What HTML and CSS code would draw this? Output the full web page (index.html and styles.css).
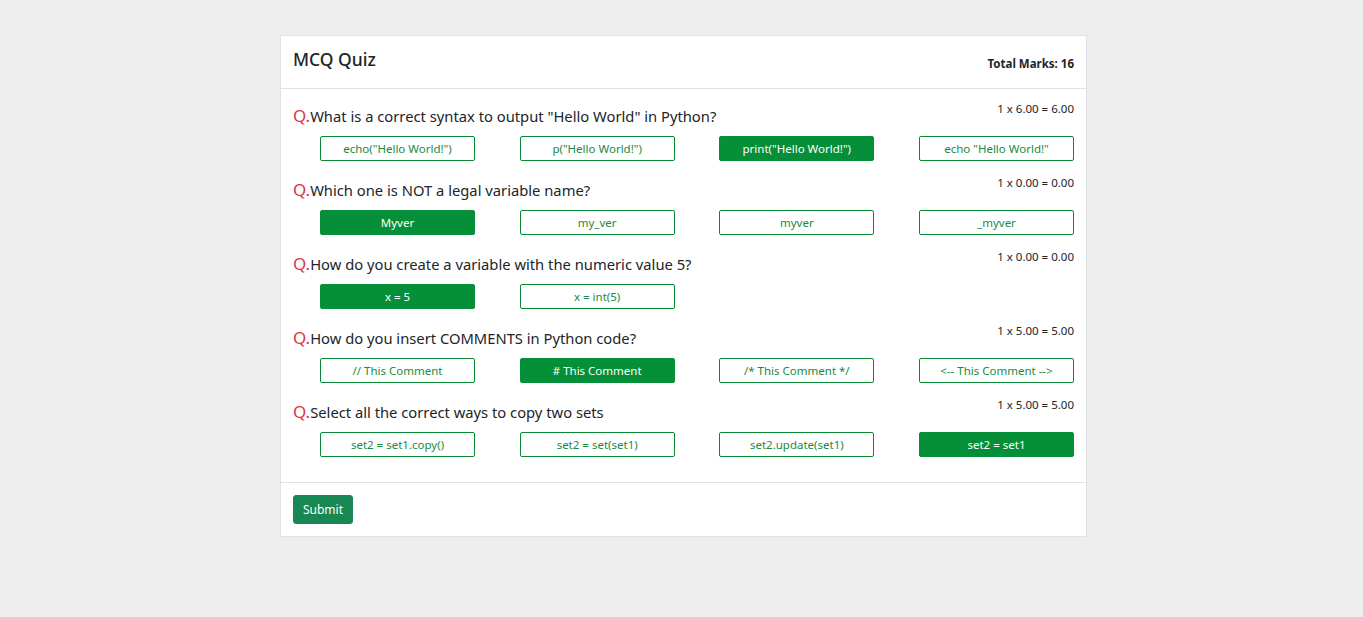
FILE: index.html
```html
<!DOCTYPE html>
<html lang="en">
<head>
<meta charset="utf-8">
<title>MCQ Quiz</title>
<link rel="stylesheet" href="styles.css">
</head>
<body>
<div class="page">
  <div class="card">
    <div class="card-header">
      <h1 class="title">MCQ Quiz</h1>
      <div class="total">Total Marks: 16</div>
    </div>
    <div class="card-body">
      <div class="question">
        <div class="q-head">
          <div class="q-text"><span class="q-mark">Q.</span>What is a correct syntax to output "Hello World" in Python?</div>
          <div class="marks">1 x 6.00 = 6.00</div>
        </div>
        <div class="options">
          <button class="opt">echo("Hello World!")</button>
          <button class="opt">p("Hello World!")</button>
          <button class="opt selected">print("Hello World!")</button>
          <button class="opt">echo "Hello World!"</button>
        </div>
      </div>
      <div class="question">
        <div class="q-head">
          <div class="q-text"><span class="q-mark">Q.</span>Which one is NOT a legal variable name?</div>
          <div class="marks">1 x 0.00 = 0.00</div>
        </div>
        <div class="options">
          <button class="opt selected">Myver</button>
          <button class="opt">my_ver</button>
          <button class="opt">myver</button>
          <button class="opt">_myver</button>
        </div>
      </div>
      <div class="question">
        <div class="q-head">
          <div class="q-text"><span class="q-mark">Q.</span>How do you create a variable with the numeric value 5?</div>
          <div class="marks">1 x 0.00 = 0.00</div>
        </div>
        <div class="options">
          <button class="opt selected">x = 5</button>
          <button class="opt">x = int(5)</button>
        </div>
      </div>
      <div class="question">
        <div class="q-head">
          <div class="q-text"><span class="q-mark">Q.</span>How do you insert COMMENTS in Python code?</div>
          <div class="marks">1 x 5.00 = 5.00</div>
        </div>
        <div class="options">
          <button class="opt">// This Comment</button>
          <button class="opt selected"># This Comment</button>
          <button class="opt">/* This Comment */</button>
          <button class="opt">&lt;-- This Comment --&gt;</button>
        </div>
      </div>
      <div class="question">
        <div class="q-head">
          <div class="q-text"><span class="q-mark">Q.</span>Select all the correct ways to copy two sets</div>
          <div class="marks">1 x 5.00 = 5.00</div>
        </div>
        <div class="options">
          <button class="opt">set2 = set1.copy()</button>
          <button class="opt">set2 = set(set1)</button>
          <button class="opt">set2.update(set1)</button>
          <button class="opt selected">set2 = set1</button>
        </div>
      </div>
    </div>
    <div class="card-footer">
      <button class="submit">Submit</button>
    </div>
  </div>
</div>
</body>
</html>
```

FILE: styles.css
```css
* { box-sizing: border-box; }
html, body { margin: 0; padding: 0; }
body {
  background: #eeeeee;
  font-family: "Noto Sans", "Open Sans", sans-serif;
  color: #212529;
}
.page {
  padding-top: 35px;
  padding-left: 4px;
  display: flex;
  justify-content: center;
}
.card {
  width: 807px;
  background: #fff;
  border: 1px solid #dfe1e4;
}
.card-header {
  display: flex;
  justify-content: space-between;
  align-items: flex-start;
  padding: 10px 12px 0 12px;
  height: 53px;
  border-bottom: 1px solid #dfe1e4;
}
.title {
  margin: 0;
  font-size: 17.5px;
  font-weight: 500;
  line-height: 26px;
  color: #212529;
}
.total {
  font-size: 11.5px;
  font-weight: 700;
  line-height: 16px;
  margin-top: 10px;
  color: #212529;
}
.card-body {
  padding: 12px 12px 25px 12px;
}
.question { margin-bottom: 14px; }
.question:last-child { margin-bottom: 0; }
.q-head {
  display: flex;
  justify-content: space-between;
  align-items: flex-start;
}
.q-text {
  padding-top: 3px;
  font-size: 14.75px;
  line-height: 24px;
  color: #212529;
}
.q-mark {
  color: #dc3545;
  font-size: 17px;
}
.marks {
  margin-top: 1px;
  font-size: 11.5px;
  line-height: 14px;
  color: #212529;
}
.options {
  display: grid;
  grid-template-columns: repeat(4, 155px);
  column-gap: 44.67px;
  margin-top: 8px;
  padding-left: 27px;
}
.opt {
  height: 25px;
  border: 1px solid #088a35;
  border-radius: 2px;
  background: #fff;
  color: #1a8a3e;
  font-family: inherit;
  font-size: 11.5px;
  padding: 0;
  line-height: 23px;
}
.opt.selected {
  background: #058f38;
  border-color: #058f38;
  color: #fff;
}
.card-footer {
  border-top: 1px solid #dfe1e4;
  padding: 12px;
  height: 54px;
}
.submit {
  background: #198754;
  border: 1px solid #198754;
  color: #fff;
  border-radius: 3px;
  font-family: inherit;
  font-size: 12px;
  height: 29px;
  width: 60px;
  padding: 0;
}
```
